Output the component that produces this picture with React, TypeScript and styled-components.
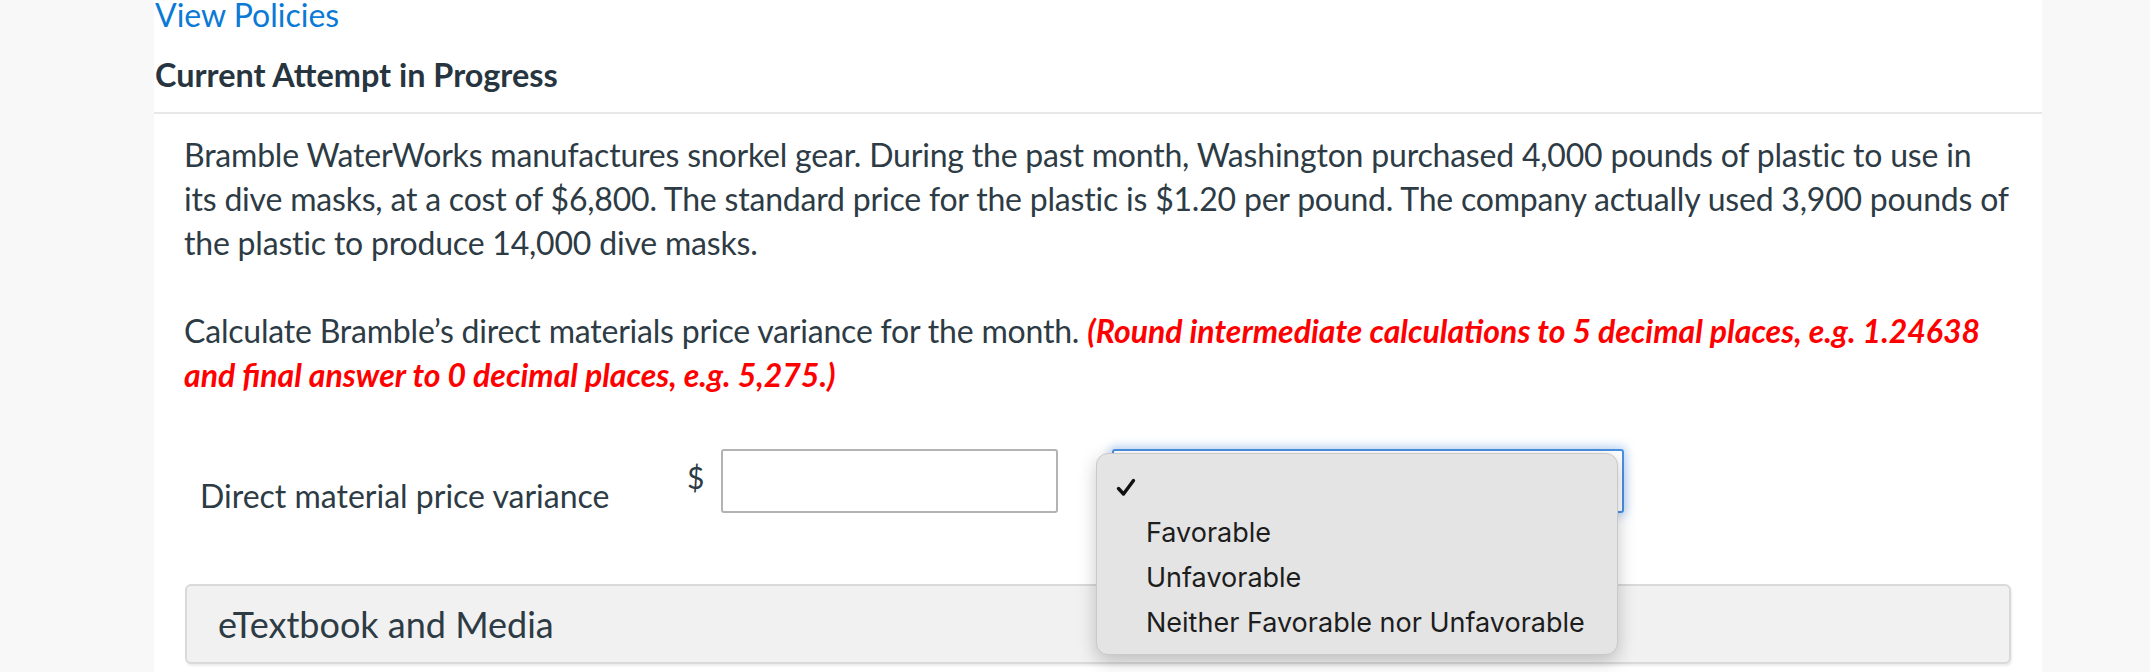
import styled, { createGlobalStyle } from "styled-components";

const GlobalStyle = createGlobalStyle`
  html, body {
    margin: 0;
    padding: 0;
    background: #ffffff;
    overflow: hidden;
  }
  body {
    font-family: Lato, "Noto Sans", sans-serif;
    color: #2d3b45;
  }
`;

const Page = styled.div`
  display: flex;
  width: 2150px;
  height: 672px;
  overflow: hidden;
`;

const Gutter = styled.div<{ $w: number }>`
  flex: 0 0 ${(p) => p.$w}px;
  background: #f8f8f8;
`;

const Main = styled.main`
  flex: 0 0 1888px;
  background: #ffffff;
  display: flex;
  flex-direction: column;
`;

const PolicyLink = styled.a`
  display: block;
  padding: 0 1px;
  margin-top: -5px;
  font-size: 32px;
  line-height: 40px;
  color: #0b7ad5;
  text-decoration: none;
`;

const Heading = styled.h2`
  margin: 0;
  padding: 20px 1px 17px;
  font-size: 32.4px;
  line-height: 40px;
  font-weight: 700;
  color: #273540;
  border-bottom: 2px solid #e8e8e8;
`;

const Question = styled.div`
  padding: 19px 31px 0 30px;
  display: flex;
  flex-direction: column;
`;

const Para = styled.p<{ $last?: boolean }>`
  margin: 0 0 ${(p) => (p.$last ? 0 : 44)}px;
  font-size: 32px;
  line-height: 44px;
  letter-spacing: -0.2px;
`;

const Hint = styled.span`
  color: #ff0000;
  font-weight: 700;
  font-style: italic;
  letter-spacing: 0;
`;

const AnswerRow = styled.div`
  display: flex;
  align-items: flex-start;
  margin-top: 52px;
  padding-left: 16px;
  position: relative;
`;

const Label = styled.span`
  flex: 0 0 487px;
  margin-top: 27px;
  font-size: 32px;
  line-height: 40px;
`;

const Currency = styled.span`
  margin-top: 8px;
  margin-right: 17px;
  font-size: 30px;
  line-height: 40px;
`;

const NumberInput = styled.input`
  box-sizing: border-box;
  width: 337px;
  height: 64px;
  border: 2px solid #b3b3b3;
  border-radius: 3px;
  background: #fff;
  margin-right: 54px;
`;

const SelectBox = styled.div`
  box-sizing: border-box;
  width: 512px;
  height: 64px;
  border: 2px solid #4a90e2;
  border-radius: 3px;
  background: #fff;
  box-shadow: 0 0 10px 3px rgba(74, 144, 226, 0.35);
`;

const Menu = styled.ul`
  position: absolute;
  left: 912px;
  top: 4px;
  width: 522px;
  box-sizing: border-box;
  margin: 0;
  padding: 11px 0 9px;
  list-style: none;
  background: #e4e4e4;
  border: 1px solid #c9c9c9;
  border-radius: 12px;
  box-shadow: 0 6px 18px rgba(0, 0, 0, 0.22);
  font-family: Inter, "Liberation Sans", sans-serif;
  font-size: 27px;
  color: #1d1d1d;
`;

const MenuItem = styled.li`
  display: flex;
  align-items: center;
  height: 45px;
  padding-left: 19px;
`;

const Check = styled.span`
  flex: 0 0 30px;
  display: flex;
  align-items: center;
`;

const Media = styled.div`
  margin-top: 68px;
  margin-left: 1px;
  width: 1826px;
  height: 80px;
  box-sizing: border-box;
  display: flex;
  align-items: center;
  padding-left: 31px;
  background: #f1f1f1;
  border: 2px solid #d9d9d9;
  border-radius: 6px;
  box-shadow: 1px 2px 2px rgba(0, 0, 0, 0.08);
  font-size: 36px;
  color: #2d3b45;
`;

const options = ["", "Favorable", "Unfavorable", "Neither Favorable nor Unfavorable"];

export default function App() {
  return (
    <>
      <GlobalStyle />
      <Page>
        <Gutter $w={154} />
        <Main>
          <PolicyLink href="#">View Policies</PolicyLink>
          <Heading>Current Attempt in Progress</Heading>
          <Question>
            <Para>
              Bramble WaterWorks manufactures snorkel gear. During the past month, Washington purchased 4,000 pounds of plastic to use in
              <br />
              its dive masks, at a cost of $6,800. The standard price for the plastic is $1.20 per pound. The company actually used 3,900 pounds of the plastic to produce 14,000 dive masks.
            </Para>
            <Para $last>
              Calculate Bramble’s direct materials price variance for the month.{" "}
              <Hint>
                (Round intermediate calculations to 5 decimal places, e.g. 1.24638 and final answer to 0 decimal places, e.g. 5,275.)
              </Hint>
            </Para>
            <AnswerRow>
              <Label>Direct material price variance</Label>
              <Currency>$</Currency>
              <NumberInput type="text" />
              <SelectBox />
              <Menu>
                {options.map((o, i) => (
                  <MenuItem key={i}>
                    <Check>
                      {i === 0 && (
                        <svg width="20" height="19" viewBox="0 0 20 19">
                          <path d="M2.5 10.5 L7.5 16 L17.5 2.5" fill="none" stroke="#111" strokeWidth="3.4" strokeLinecap="round" strokeLinejoin="round" />
                        </svg>
                      )}
                    </Check>
                    {o}
                  </MenuItem>
                ))}
              </Menu>
            </AnswerRow>
            <Media>eTextbook and Media</Media>
          </Question>
        </Main>
        <Gutter $w={108} />
      </Page>
    </>
  );
}
